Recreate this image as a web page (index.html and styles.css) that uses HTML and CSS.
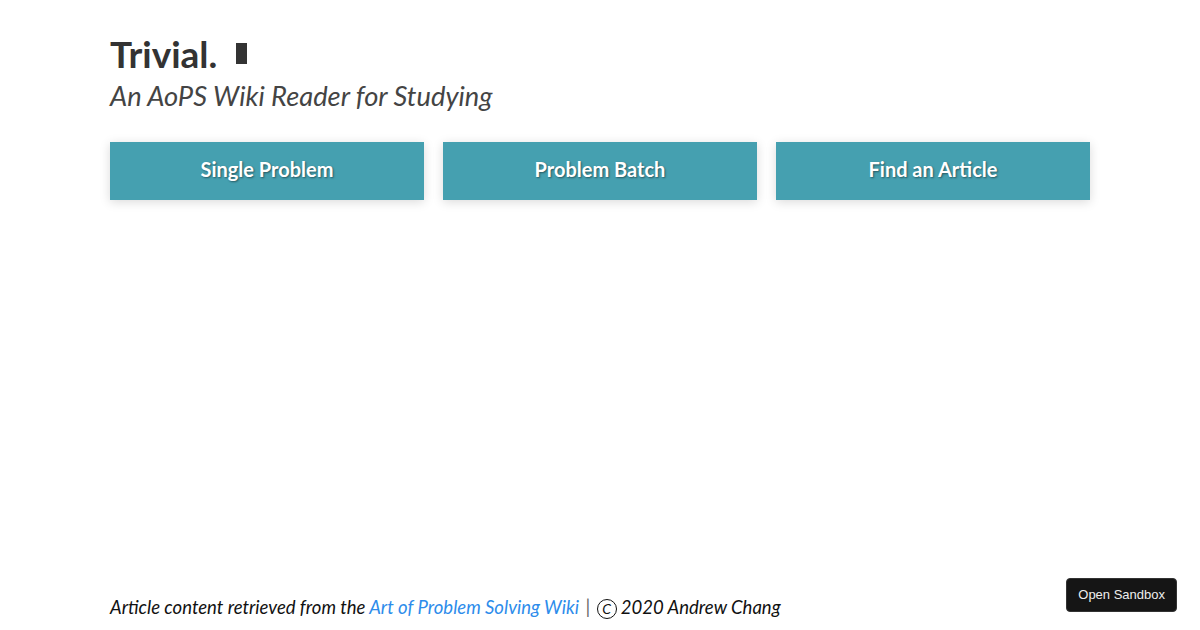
FILE: index.html
```html
<!DOCTYPE html>
<html lang="en">
  <head>
    <meta charset="UTF-8" />
    <meta name="viewport" content="width=device-width, initial-scale=1.0" />
    <title>Trivial.</title>
    <link rel="stylesheet" href="styles.css">
  </head>
  <body>
    <div class="page">
      <div class="container">
        <h1 class="title">Trivial.<span class="cursor"></span></h1>
        <h2 class="subtitle">An AoPS Wiki Reader for Studying</h2>

        <div class="menu">
          <button class="menu-btn">Single Problem</button>
          <button class="menu-btn">Problem Batch</button>
          <button class="menu-btn">Find an Article</button>
        </div>
      </div>

      <footer class="container footer">
        Article content retrieved from the
        <a href="#">Art of Problem Solving Wiki</a>
        <span class="sep">|</span> <span class="copy">C</span> 2020 Andrew Chang
      </footer>
    </div>

    <button class="sandbox-btn">Open Sandbox</button>
  </body>
</html>
```

FILE: styles.css
```css
body {
  font-family: Lato, "DejaVu Sans", sans-serif;
  background-color: #fff;
  color: #333;
  margin: 0;
  padding: 0;
}

.page {
  min-height: 100vh;
  display: flex;
  flex-direction: column;
  justify-content: space-between;
}

.container {
  width: 980px;
  margin: 0 auto;
}

.title {
  font-size: 37px;
  font-weight: 700;
  margin: 34px 0 0 0;
  line-height: 40px;
  display: flex;
  align-items: center;
}

.cursor {
  display: inline-block;
  width: 11px;
  height: 21px;
  margin-left: 19px;
  margin-top: -2px;
  background-color: #333;
}

.subtitle {
  font-size: 27.3px;
  font-weight: 400;
  font-style: italic;
  color: #444;
  margin: 5px 0 0 0;
  line-height: 34px;
}

.menu {
  display: grid;
  grid-template-columns: repeat(3, 1fr);
  gap: 19px;
  margin-top: 29px;
}

.menu-btn {
  height: 58px;
  padding: 0 0 4px 0;
  border: none;
  background-color: #45a0b0;
  color: #fff;
  font-family: inherit;
  font-size: 20px;
  font-weight: 700;
  text-shadow: 1px 1px 2px rgba(0, 0, 0, 0.45);
  box-shadow: 0 2px 10px rgba(0, 0, 0, 0.15);
  cursor: pointer;
}

.menu-btn:hover {
  background-color: #3b8f9e;
}

.footer {
  font-style: italic;
  font-size: 18.5px;
  color: #111;
  padding-bottom: 10px;
  line-height: 26px;
}

.footer a {
  color: #2d8ceb;
  text-decoration: none;
}

.sep {
  color: #666;
  margin: 0 2px;
}

.copy {
  display: inline-block;
  width: 18px;
  height: 18px;
  line-height: 18px;
  border: 1.5px solid #111;
  border-radius: 50%;
  text-align: center;
  font-size: 14px;
}

.sandbox-btn {
  position: fixed;
  right: 23px;
  bottom: 18px;
  padding: 8px 11px 9px;
  background-color: #151515;
  color: #eee;
  border: 1px solid #333;
  border-radius: 4px;
  font-family: "Liberation Sans", Arial, sans-serif;
  font-size: 13px;
}
```
